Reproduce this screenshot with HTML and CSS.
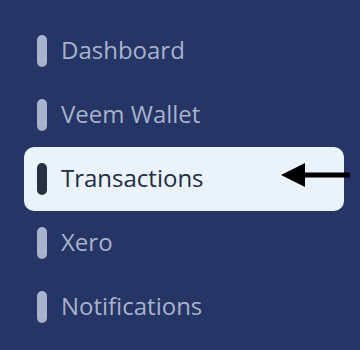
FILE: index.html
```html
<!DOCTYPE html>
<html lang="en">
<head>
<meta charset="utf-8">
<link rel="stylesheet" href="styles.css">
</head>
<body>
<nav class="sidebar">
  <ul class="menu">
    <li class="item"><span class="pill"></span><span class="label">Dashboard</span></li>
    <li class="item"><span class="pill"></span><span class="label">Veem Wallet</span></li>
    <li class="item active"><span class="pill"></span><span class="label">Transactions</span>
      <svg class="arrow" width="69" height="24" viewBox="0 0 69 24" aria-hidden="true">
        <polygon points="0,12 24,0 24,24" fill="#000"/>
        <rect x="20" y="9.5" width="49" height="5" fill="#000"/>
      </svg>
    </li>
    <li class="item"><span class="pill"></span><span class="label">Xero</span></li>
    <li class="item"><span class="pill"></span><span class="label">Notifications</span></li>
  </ul>
</nav>
</body>
</html>
```
FILE: styles.css
```css
html, body {
  margin: 0;
  padding: 0;
  background: #243566;
}
body {
  width: 360px;
  height: 350px;
  overflow: hidden;
  font-family: "Open Sans", "Noto Sans", "Liberation Sans", sans-serif;
}
.sidebar {
  padding-top: 19px;
}
.menu {
  list-style: none;
  margin: 0;
  padding: 0;
}
.item {
  position: relative;
  display: flex;
  align-items: center;
  gap: 14px;
  height: 64px;
  margin: 0 16px 0 24px;
  padding-left: 13px;
  border-radius: 10px;
  color: #a8b2cb;
  font-size: 24px;
  font-weight: 500;
  line-height: 1;
}
.pill {
  flex: none;
  width: 10px;
  height: 32px;
  border-radius: 5px;
  background: #a8b2cb;
}
.label {
  white-space: nowrap;
  padding-bottom: 3px;
}
.item.active {
  background: #eaf3fb;
  color: #222c42;
}
.item.active .pill {
  background: #253042;
}
.arrow {
  position: absolute;
  left: 257px;
  top: 16px;
}
```
